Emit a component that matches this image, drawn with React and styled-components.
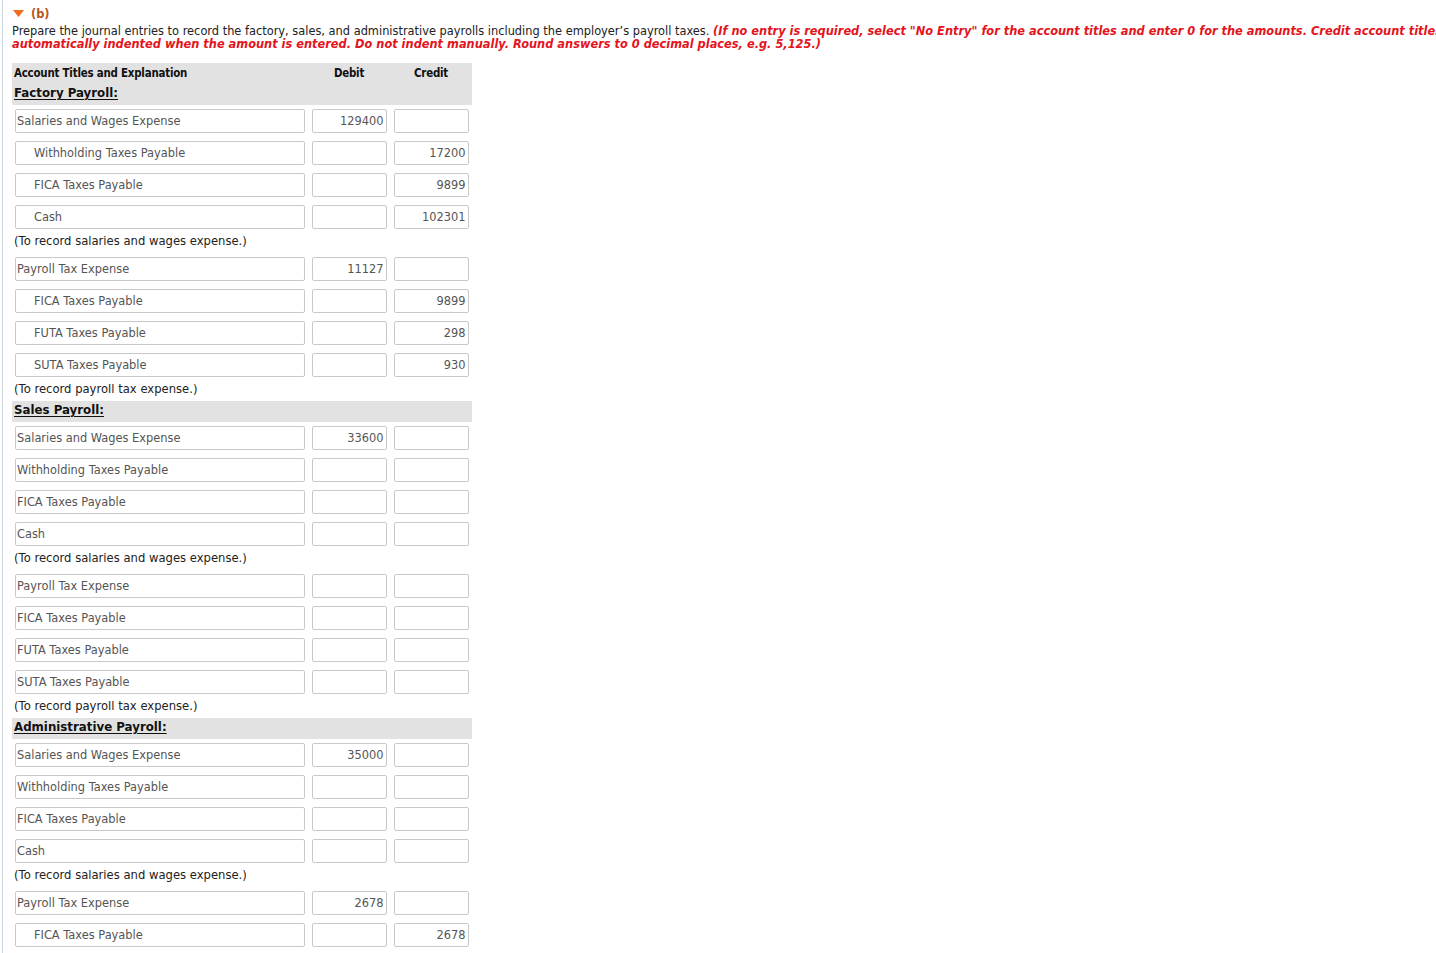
import React from "react";
import styled, { createGlobalStyle } from "styled-components";

const Global = createGlobalStyle`
  html, body { margin: 0; padding: 0; background: #fff; overflow: hidden; }
  body { font-family: "DejaVu Sans", Verdana, sans-serif; color: #222; }
`;

const Page = styled.div`
  width: 1436px;
  height: 953px;
  overflow: hidden;
`;

const Frame = styled.div`
  margin-left: 2px;
  border-left: 1px solid #cdd6df;
  min-height: 953px;
  padding: 6px 0 0 9px;
  width: 1800px;
`;

const PartHead = styled.div`
  display: flex;
  align-items: center;
  gap: 7px;
  height: 15px;
  font-size: 11.4px;
  font-weight: bold;
  color: #b9531d;
  padding-left: 1px;
`;

const Arrow = styled.svg`
  width: 11px;
  height: 7px;
  display: block;
`;

const Instructions = styled.p`
  margin: 4px 0 0 0;
  font-size: 11.4px;
  line-height: 13px;
  white-space: nowrap;
  color: #222;
`;

const Red = styled.span`
  color: #e3141c;
  font-weight: bold;
  font-style: italic;
`;

const Table = styled.div`
  margin-top: 12px;
  width: 460px;
  display: grid;
  grid-template-columns: 296px 82px 82px;
`;

const Band = styled.div`
  grid-column: 1 / -1;
  background: #e2e2e2;
  display: grid;
  grid-template-columns: 296px 82px 82px;
`;

const HeadCell = styled.div`
  height: 21px;
  line-height: 21px;
  font-size: 11.4px;
  font-weight: bold;
  color: #111;
  padding-left: ${(p) => (p.$center ? "0" : "2px")};
  text-align: ${(p) => (p.$center ? "center" : "left")};
  font-family: "DejaVu Sans Condensed", "DejaVu Sans", sans-serif;
  letter-spacing: -0.2px;
`;

const SectionTitle = styled.div`
  grid-column: 1 / -1;
  height: 21px;
  line-height: 19px;
  padding-left: 2px;
  font-size: 11.8px;
  font-weight: bold;
  color: #111;
  text-decoration: underline;
  text-underline-offset: 2px;
`;

const Cell = styled.div`
  height: 32px;
  display: flex;
  align-items: center;
  justify-content: center;
`;

const Field = styled.div`
  box-sizing: border-box;
  height: 24px;
  width: ${(p) => p.$w}px;
  border: 1px solid #c9c9c9;
  border-radius: 2px;
  background: #fff;
  font-size: 11.4px;
  line-height: 23px;
  color: #555;
  white-space: nowrap;
  overflow: hidden;
  text-align: ${(p) => (p.$num ? "right" : "left")};
  padding: ${(p) =>
    p.$num ? "0 2px 0 0" : p.$indent ? "0 0 0 18px" : "0 0 0 1px"};
`;

const Note = styled.div`
  grid-column: 1 / -1;
  height: 20px;
  line-height: 16px;
  padding-left: 2px;
  font-size: 11.6px;
  color: #222;
`;

const groups = [
  {
    title: "Factory Payroll:",
    header: true,
    entries: [
      {
        rows: [
          ["Salaries and Wages Expense", false, "129400", ""],
          ["Withholding Taxes Payable", true, "", "17200"],
          ["FICA Taxes Payable", true, "", "9899"],
          ["Cash", true, "", "102301"],
        ],
        note: "(To record salaries and wages expense.)",
      },
      {
        rows: [
          ["Payroll Tax Expense", false, "11127", ""],
          ["FICA Taxes Payable", true, "", "9899"],
          ["FUTA Taxes Payable", true, "", "298"],
          ["SUTA Taxes Payable", true, "", "930"],
        ],
        note: "(To record payroll tax expense.)",
      },
    ],
  },
  {
    title: "Sales Payroll:",
    entries: [
      {
        rows: [
          ["Salaries and Wages Expense", false, "33600", ""],
          ["Withholding Taxes Payable", false, "", ""],
          ["FICA Taxes Payable", false, "", ""],
          ["Cash", false, "", ""],
        ],
        note: "(To record salaries and wages expense.)",
      },
      {
        rows: [
          ["Payroll Tax Expense", false, "", ""],
          ["FICA Taxes Payable", false, "", ""],
          ["FUTA Taxes Payable", false, "", ""],
          ["SUTA Taxes Payable", false, "", ""],
        ],
        note: "(To record payroll tax expense.)",
      },
    ],
  },
  {
    title: "Administrative Payroll:",
    entries: [
      {
        rows: [
          ["Salaries and Wages Expense", false, "35000", ""],
          ["Withholding Taxes Payable", false, "", ""],
          ["FICA Taxes Payable", false, "", ""],
          ["Cash", false, "", ""],
        ],
        note: "(To record salaries and wages expense.)",
      },
      {
        rows: [
          ["Payroll Tax Expense", false, "2678", ""],
          ["FICA Taxes Payable", true, "", "2678"],
        ],
      },
    ],
  },
];

export default function App() {
  return (
    <Page>
      <Global />
      <Frame>
        <PartHead>
          <Arrow viewBox="0 0 11 7">
            <polygon points="0,0 11,0 5.5,7" fill="#f26b1d" />
          </Arrow>
          <span>(b)</span>
        </PartHead>
        <Instructions>
          Prepare the journal entries to record the factory, sales, and
          administrative payrolls including the employer’s payroll taxes.{" "}
          <Red>
            (If no entry is required, select "No Entry" for the account titles
            and enter 0 for the amounts. Credit account titles are
            <br />
            automatically indented when the amount is entered. Do not indent
            manually. Round answers to 0 decimal places, e.g. 5,125.)
          </Red>
        </Instructions>
        <Table>
          {groups.map((g, gi) => (
            <React.Fragment key={gi}>
              <Band>
                {g.header && (
                  <>
                    <HeadCell>Account Titles and Explanation</HeadCell>
                    <HeadCell $center>Debit</HeadCell>
                    <HeadCell $center>Credit</HeadCell>
                  </>
                )}
                <SectionTitle>{g.title}</SectionTitle>
              </Band>
              {g.entries.map((e, ei) => (
                <React.Fragment key={ei}>
                  {e.rows.map((r, ri) => (
                    <React.Fragment key={ri}>
                      <Cell>
                        <Field $w={290} $indent={r[1]}>
                          {r[0]}
                        </Field>
                      </Cell>
                      <Cell>
                        <Field $w={75} $num>
                          {r[2]}
                        </Field>
                      </Cell>
                      <Cell>
                        <Field $w={75} $num>
                          {r[3]}
                        </Field>
                      </Cell>
                    </React.Fragment>
                  ))}
                  {e.note && <Note>{e.note}</Note>}
                </React.Fragment>
              ))}
            </React.Fragment>
          ))}
        </Table>
      </Frame>
    </Page>
  );
}
